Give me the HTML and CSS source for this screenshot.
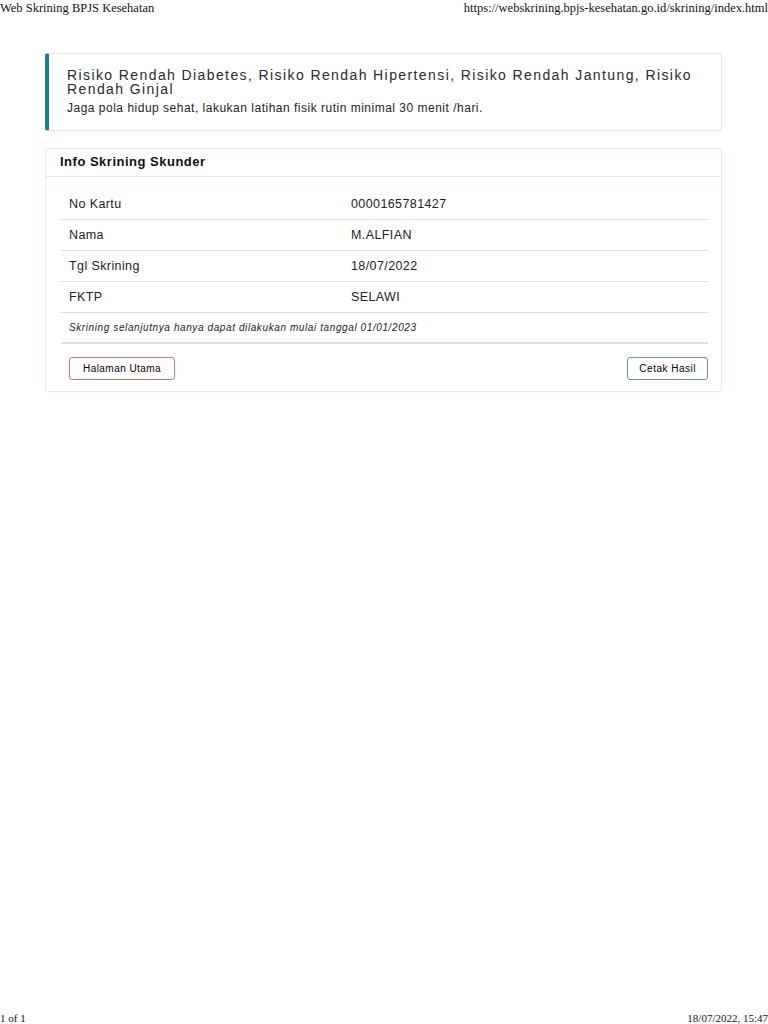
FILE: index.html
```html
<!DOCTYPE html>
<html lang="id">
<head>
<meta charset="utf-8">
<title>Web Skrining BPJS Kesehatan</title>
<link rel="stylesheet" href="styles.css">
</head>
<body>
<div class="print-header">
  <span>Web Skrining BPJS Kesehatan</span>
  <span>https://webskrining.bpjs-kesehatan.go.id/skrining/index.html</span>
</div>
<main class="content">
  <div class="alert">
    <div class="alert-title">Risiko Rendah Diabetes, Risiko Rendah Hipertensi, Risiko Rendah Jantung, Risiko Rendah Ginjal</div>
    <div class="alert-text">Jaga pola hidup sehat, lakukan latihan fisik rutin minimal 30 menit /hari.</div>
  </div>
  <section class="card">
    <div class="card-header">Info Skrining Skunder</div>
    <div class="card-body">
      <table class="info-table">
        <tr><td class="label">No Kartu</td><td>0000165781427</td></tr>
        <tr><td class="label">Nama</td><td>M.ALFIAN</td></tr>
        <tr><td class="label">Tgl Skrining</td><td>18/07/2022</td></tr>
        <tr><td class="label">FKTP</td><td>SELAWI</td></tr>
        <tr class="note-row"><td colspan="2">Skrining selanjutnya hanya dapat dilakukan mulai tanggal 01/01/2023</td></tr>
      </table>
      <div class="actions">
        <button class="btn btn-danger">Halaman Utama</button>
        <button class="btn btn-primary">Cetak Hasil</button>
      </div>
    </div>
  </section>
</main>
<div class="print-footer">
  <span>1 of 1</span>
  <span>18/07/2022, 15:47</span>
</div>
</body>
</html>
```
FILE: styles.css
```css
html, body {
  margin: 0;
  padding: 0;
  background: #fff;
}
body {
  width: 768px;
  height: 1024px;
  display: flex;
  flex-direction: column;
  font-family: "Liberation Sans", Arial, sans-serif;
  color: #222;
}
.print-header,
.print-footer {
  display: flex;
  justify-content: space-between;
  font-family: "Liberation Serif", "Times New Roman", serif;
  color: #111;
}
.print-header {
  height: 16px;
  font-size: 12.5px;
  line-height: 16px;
}
.print-footer {
  margin-top: auto;
  font-size: 11px;
  line-height: 12px;
}
.content {
  margin: 37px 46px 0 45px;
}
.alert {
  border: 1px solid #e4e7ea;
  border-left: 4px solid #1f7d8c;
  border-radius: 3px;
  padding: 14px 26px 14px 18px;
  box-shadow: 0 1px 1px rgba(0,0,0,0.04);
}
.alert-title {
  font-size: 14px;
  line-height: 14px;
  letter-spacing: 1.4px;
  color: #2a2a2a;
}
.alert-text {
  font-size: 12px;
  line-height: 15px;
  margin-top: 5px;
  letter-spacing: 0.5px;
  color: #222;
}
.card {
  margin-top: 17px;
  border: 1px solid #d8eef3;
  border-radius: 3px;
}
.card-header {
  height: 27px;
  line-height: 26px;
  padding-left: 14px;
  font-size: 13px;
  letter-spacing: 0.5px;
  font-weight: bold;
  color: #111;
  border-bottom: 1px solid #d8eef3;
}
.card-body {
  padding: 12px 13px 11px 15px;
}
.info-table {
  width: 100%;
  border-collapse: collapse;
}
.info-table td {
  height: 30px;
  padding: 0 0 0 8px;
  border-bottom: 1px solid #dedede;
  font-size: 12.5px;
  letter-spacing: 0.4px;
  color: #222;
  vertical-align: middle;
}
.info-table td.label {
  width: 274px;
}
.note-row td {
  height: 29px;
  border-bottom: 2px solid #dedede;
  font-style: italic;
  font-size: 10px;
  letter-spacing: 0.6px;
  color: #222;
}
.actions {
  display: flex;
  justify-content: space-between;
  margin-top: 13px;
  padding-left: 8px;
}
.btn {
  height: 23px;
  background: #fff;
  border-radius: 3px;
  font-family: "Liberation Sans", Arial, sans-serif;
  font-size: 10px;
  color: #000;
  padding: 0 11px;
  cursor: pointer;
}
.btn.btn-danger {
  border: 1px solid #dc7474;
  padding: 0 13px;
  letter-spacing: 0.45px;
}
.btn.btn-primary {
  border: 1px solid #6f8fb5;
  letter-spacing: 0.5px;
}
```
